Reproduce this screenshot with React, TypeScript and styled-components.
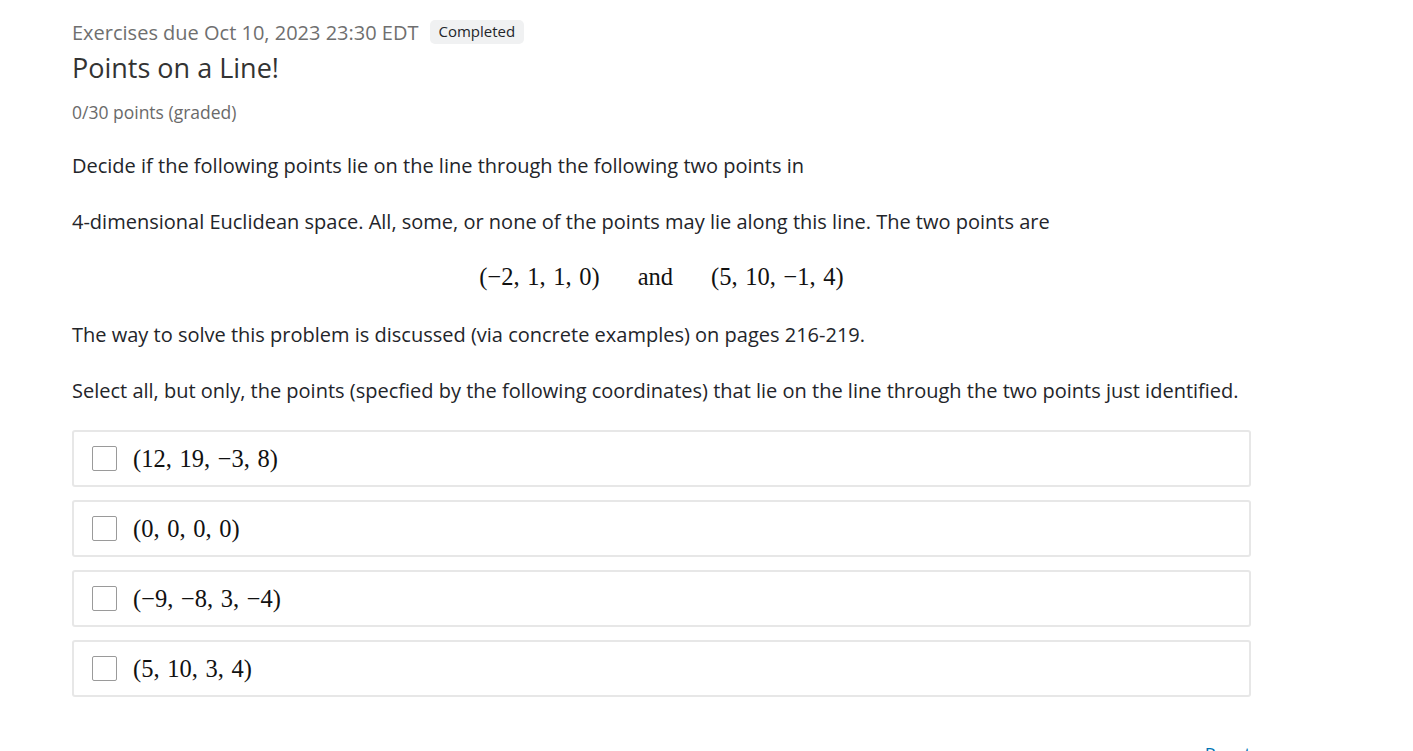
import React from 'react';
import styled, { createGlobalStyle } from 'styled-components';

const GlobalStyle = createGlobalStyle`
  html, body {
    margin: 0;
    padding: 0;
    background: #ffffff;
  }
  body {
    font-family: "Open Sans", "Noto Sans", sans-serif;
    color: #23252a;
  }
`;

const options = [
  '(12, 19, −3, 8)',
  '(0, 0, 0, 0)',
  '(−9, −8, 3, −4)',
  '(5, 10, 3, 4)',
];

export default function App() {
  return (
    <>
      <GlobalStyle />
      <Page>
        <DueRow>
          <DueText>Exercises due Oct 10, 2023 23:30 EDT</DueText>
          <Badge>Completed</Badge>
        </DueRow>
        <Title>Points on a Line!</Title>
        <Grade>0/30 points (graded)</Grade>
        <Para>Decide if the following points lie on the line through the following two points in</Para>
        <Para>
          4-dimensional Euclidean space. All, some, or none of the points may lie along this line. The two
          points are
        </Para>
        <DisplayMath>
          <Math>(−2, 1, 1, 0)</Math>
          <Math>and</Math>
          <Math>(5, 10, −1, 4)</Math>
        </DisplayMath>
        <Para>The way to solve this problem is discussed (via concrete examples) on pages 216-219.</Para>
        <Para>
          Select all, but only, the points (specfied by the following coordinates) that lie on the line through
          the two points just identified.
        </Para>
        <Choices>
          {options.map((o) => (
            <Choice key={o}>
              <Box type="checkbox" />
              <Math>{o}</Math>
            </Choice>
          ))}
        </Choices>
        <Actions>
          <ResetLink href="#">Reset</ResetLink>
        </Actions>
      </Page>
    </>
  );
}

const Page = styled.div`
  width: 1179px;
  padding: 18px 0 0 72px;
`;

const DueRow = styled.div`
  display: flex;
  align-items: center;
  gap: 11px;
  height: 28px;
`;

const DueText = styled.span`
  font-size: 20px;
  color: #6f6f6f;
`;

const Badge = styled.span`
  background: #f0f1f2;
  border-radius: 5px;
  padding: 1px 9px 2px;
  font-size: 15px;
  line-height: 21px;
  color: #23252a;
`;

const Title = styled.h2`
  margin: 4px 0 0;
  font-size: 27px;
  font-weight: 400;
  color: #333;
  line-height: 36px;
`;

const Grade = styled.div`
  margin-top: 13px;
  font-size: 17.5px;
  color: #6a6a6a;
  line-height: 26px;
`;

const Para = styled.p`
  margin: 26px 0 0;
  font-size: 20px;
  line-height: 30px;
`;

const DisplayMath = styled.div`
  display: flex;
  justify-content: center;
  align-items: center;
  gap: 38px;
  margin-top: 25px;
  height: 30px;
  & + p {
    margin-top: 28px;
  }
`;

const Math = styled.span`
  font-family: "Liberation Serif", "DejaVu Serif", serif;
  font-size: 24.5px;
  color: #111;
  white-space: pre;
  word-spacing: 1.5px;
`;

const Choices = styled.div`
  display: flex;
  flex-direction: column;
  gap: 13px;
  margin-top: 24px;
`;

const Choice = styled.label`
  display: flex;
  align-items: center;
  gap: 16px;
  height: 53px;
  padding: 0 18px;
  border: 2px solid #e7e7e7;
  border-radius: 3px;
`;

const Box = styled.input`
  appearance: none;
  margin: 0;
  width: 25px;
  height: 25px;
  border: 1px solid #9a9a9a;
  border-radius: 2px;
  background: #fff;
`;

const Actions = styled.div`
  display: flex;
  justify-content: flex-end;
  margin-top: 43px;
`;

const ResetLink = styled.a`
  font-size: 18px;
  line-height: 28px;
  color: #0075b4;
  text-decoration: none;
`;
